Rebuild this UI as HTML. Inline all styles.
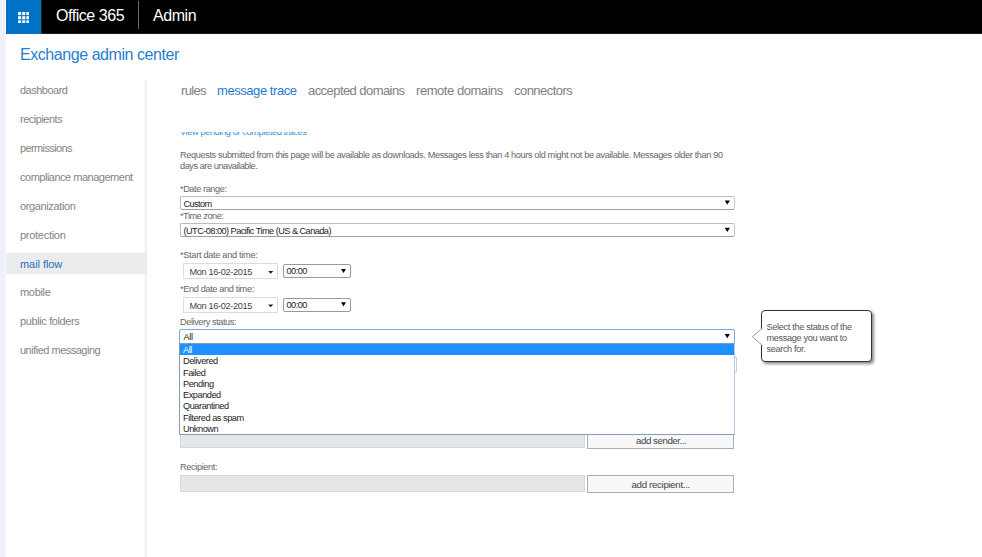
<!DOCTYPE html>
<html>
<head>
<meta charset="utf-8">
<title>Exchange admin center</title>
<style>
html,body{margin:0;padding:0;}
body{width:982px;height:557px;overflow:hidden;background:#fff;position:relative;font-family:"Liberation Sans",sans-serif;color:#333;}
.abs{position:absolute;white-space:nowrap;}
#strip{left:0;top:0;width:5px;height:557px;background:#edf1fa;border-right:1px solid #f6f8fd;}
#stripw{left:5px;top:0;width:1px;height:34px;background:#fff;}
#topbar{left:6px;top:0;width:976px;height:33px;background:#000;border-bottom:1px solid #1c1c1c;}
#waffle{left:6px;top:0;width:35px;height:33px;background:#0072c6;border-bottom:1px solid #1468bd;border-right:1px solid #2b241c;}
#waffle svg{position:absolute;left:11.75px;top:11.5px;}
#o365{left:56px;top:6px;font-size:16px;line-height:20px;color:#fff;}
#hsep{left:138px;top:1px;width:1px;height:28px;background:#6a6a6a;}
#admin{left:153px;top:6px;font-size:16px;line-height:20px;color:#fff;}
#title{left:20px;top:45px;font-size:16px;line-height:20px;color:#2380d0;}
#vdiv{left:144px;top:80px;width:2px;height:477px;background:#f2f2f2;border-left:1px solid #f9f9f9;}
.nav{left:6px;width:139px;height:27px;}
.nav span{position:absolute;left:14px;top:6px;font-size:11px;line-height:15px;color:#848484;white-space:nowrap;}
#navsel{left:6px;top:253px;width:141px;height:21px;background:#ebecee;}
.nav.sel span{color:#2a70b8;}
.tab{top:82px;font-size:13px;line-height:17px;color:#808080;}
.tab.sel{color:#1f7ad0;}
.lbl,.opt,.tiptxt,.sel-box,.datebox,.timebox,#viewlink span,#t_all{letter-spacing:-0.37px;}
.lbl{font-size:9.2px;line-height:11px;color:#666;}
.sel-box{height:12px;border:1px solid #bdbdbd;border-bottom-color:#9e9e9e;border-right-color:#c8c8c8;border-radius:2px;background:#fff;font-size:9.2px;line-height:11px;color:#222;box-sizing:content-box;}
.arrow{position:absolute;width:0;height:0;border-left:3px solid transparent;border-right:3px solid transparent;border-top:4.75px solid #000;}
.gray{background:#e6e6e6;border:1px solid #d3d9de;box-sizing:border-box;}
.btn{background:#f8f8f8;border:1px solid #a9b0b4;box-sizing:border-box;font-size:9.7px;line-height:11px;color:#444;}

.datebox{width:95px;height:16px;border:1px solid #d9dde3;box-sizing:border-box;background:#fff;font-size:9.2px;line-height:11px;color:#444;}
.timebox{width:68px;height:14px;border:1px solid #9a9a9a;border-radius:2px;box-sizing:border-box;background:#fff;font-size:9.2px;line-height:11px;color:#222;}
.arrow2{position:absolute;width:0;height:0;border-left:3px solid transparent;border-right:3px solid transparent;border-top:3.5px solid #222;}
.opt{font-size:9.2px;line-height:11px;color:#222;letter-spacing:-0.45px !important;}
.opt.hi{color:#fff;}
.tiptxt{font-size:9.2px;line-height:11px;color:#555;}
/*FIT*/
#o365{letter-spacing:-0.45px}
#admin{letter-spacing:-0.43px}
#title{letter-spacing:-0.44px}
#n1{letter-spacing:-0.50px}
#n2{letter-spacing:-0.49px}
#n3{letter-spacing:-0.61px}
#n4{letter-spacing:-0.49px}
#n5{letter-spacing:-0.37px}
#n6{letter-spacing:-0.28px}
#n7{letter-spacing:-0.06px}
#n8{letter-spacing:-0.32px}
#n9{letter-spacing:-0.38px}
#n10{letter-spacing:-0.50px}
#tb1{letter-spacing:-0.64px}
#tb2{letter-spacing:-0.44px}
#tb3{letter-spacing:-0.56px}
#tb4{letter-spacing:-0.45px}
#tb5{letter-spacing:-0.53px}
#para1{letter-spacing:-0.38px}
#l_date{letter-spacing:-0.42px}
#l_start{letter-spacing:-0.30px}
#l_end{letter-spacing:-0.36px}
#l_deliv{letter-spacing:-0.42px}
#l_recip{letter-spacing:-0.36px}
#t_custom{letter-spacing:-0.59px}
#t_d1{letter-spacing:-0.36px}
#t_t1{letter-spacing:-0.52px}
#t_adds{letter-spacing:-0.44px}
#t_addr{letter-spacing:-0.32px}
#tip1{letter-spacing:-0.34px}
#t_d2{letter-spacing:-0.36px}
#t_t2{letter-spacing:-0.52px}
#l_tz{letter-spacing:-0.48px}
#tip2{letter-spacing:-0.35px}
#t_tz{letter-spacing:-0.54px}
#para2{letter-spacing:-0.45px}
/*ENDFIT*/
</style>
</head>
<body>
<div id="strip" class="abs"></div>
<div id="stripw" class="abs"></div>
<div id="topbar" class="abs"></div>
<div id="waffle" class="abs"><svg width="11.5" height="11.5" viewBox="0 0 11 11"><g fill="#fff"><rect x="0" y="0" width="3" height="3"/><rect x="4" y="0" width="3" height="3"/><rect x="8" y="0" width="3" height="3"/><rect x="0" y="4" width="3" height="3"/><rect x="4" y="4" width="3" height="3"/><rect x="8" y="4" width="3" height="3"/><rect x="0" y="8" width="3" height="3"/><rect x="4" y="8" width="3" height="3"/><rect x="8" y="8" width="3" height="3"/></g></svg></div>
<div id="o365" class="abs">Office 365</div>
<div id="hsep" class="abs"></div>
<div id="admin" class="abs">Admin</div>
<div id="title" class="abs">Exchange admin center</div>
<div id="vdiv" class="abs"></div>

<div id="navsel" class="abs"></div>
<div class="abs nav" style="top:77px"><span id="n1">dashboard</span></div>
<div class="abs nav" style="top:106px"><span id="n2">recipients</span></div>
<div class="abs nav" style="top:135px"><span id="n3">permissions</span></div>
<div class="abs nav" style="top:164px"><span id="n4">compliance management</span></div>
<div class="abs nav" style="top:193px"><span id="n5">organization</span></div>
<div class="abs nav" style="top:222px"><span id="n6">protection</span></div>
<div class="abs nav sel" style="top:251px"><span id="n7">mail flow</span></div>
<div class="abs nav" style="top:279px"><span id="n8">mobile</span></div>
<div class="abs nav" style="top:308px"><span id="n9">public folders</span></div>
<div class="abs nav" style="top:337px"><span id="n10">unified messaging</span></div>

<div id="tb1" class="abs tab" style="left:181px">rules</div>
<div id="tb2" class="abs tab sel" style="left:217px">message trace</div>
<div id="tb3" class="abs tab" style="left:308px">accepted domains</div>
<div id="tb4" class="abs tab" style="left:416px">remote domains</div>
<div id="tb5" class="abs tab" style="left:514px">connectors</div>

<!-- main content -->
<div id="viewlink" class="abs" style="left:180px;top:132px;width:200px;height:6px;overflow:hidden;"><span class="abs" style="left:0;top:-5px;font-size:9.2px;line-height:11px;color:#3b8fd6;">View pending or completed traces</span></div>
<div id="para1" class="abs lbl" style="left:180px;top:150px;">Requests submitted from this page will be available as downloads. Messages less than 4 hours old might not be available. Messages older than 90</div>
<div id="para2" class="abs lbl" style="left:180px;top:161px;">days are unavailable.</div>

<div id="l_date" class="abs lbl" style="left:180px;top:184px;">*Date range:</div>
<div class="abs sel-box" style="left:180px;top:196px;width:553px;"><span id="t_custom" class="abs" style="left:2.5px;top:2px;">Custom</span></div>
<div id="l_tz" class="abs lbl" style="left:180px;top:211px;">*Time zone:</div>
<div class="abs sel-box" style="left:180px;top:223px;width:553px;"><span id="t_tz" class="abs" style="left:2.5px;top:2px;">(UTC-08:00) Pacific Time (US &amp; Canada)</span></div>

<div id="l_start" class="abs lbl" style="left:180px;top:250px;">*Start date and time:</div>
<div class="abs datebox" style="left:183px;top:263px;"><span id="t_d1" class="abs" style="left:5.5px;top:3px;">Mon 16-02-2015</span></div>
<div class="abs timebox" style="left:283px;top:264px;"><span id="t_t1" class="abs" style="left:2.5px;top:1px;">00:00</span></div>

<div id="l_end" class="abs lbl" style="left:180px;top:284px;">*End date and time:</div>
<div class="abs datebox" style="left:183px;top:297px;"><span id="t_d2" class="abs" style="left:5.5px;top:3px;">Mon 16-02-2015</span></div>
<div class="abs timebox" style="left:283px;top:298px;"><span id="t_t2" class="abs" style="left:2.5px;top:1px;">00:00</span></div>

<div id="l_deliv" class="abs lbl" style="left:180px;top:317px;">Delivery status:</div>

<!-- things behind the dropdown -->
<div class="abs" style="left:733px;top:357px;width:4px;height:15px;border:1px solid #cfcfcf;border-left:none;box-sizing:border-box;background:#fff;"></div>
<div class="abs gray" style="left:180px;top:432px;width:405px;height:16px;"></div>
<div class="abs btn" style="left:587px;top:431px;width:147px;height:18px;"><span id="t_adds" class="abs" style="left:48px;top:3px;">add sender...</span></div>

<div id="l_recip" class="abs lbl" style="left:180px;top:462px;">Recipient:</div>
<div class="abs gray" style="left:180px;top:475px;width:405px;height:17px;"></div>
<div class="abs btn" style="left:587px;top:475px;width:147px;height:18px;"><span id="t_addr" class="abs" style="left:43.5px;top:3px;">add recipient...</span></div>

<!-- delivery status select + open dropdown -->
<div id="dsel" class="abs" style="left:179px;top:329px;width:556px;height:15px;border:1px solid #7ba7e0;border-radius:2px;box-sizing:border-box;background:#fff;"><span id="t_all" class="abs" style="left:3.5px;top:2px;font-size:9.2px;line-height:11px;color:#222;">All</span></div>
<div id="ddl" class="abs" style="left:179px;top:343px;width:556px;height:92px;border:1px solid #7f9db9;border-right-color:#b4c8e0;box-sizing:border-box;background:#fff;">
<div class="abs" style="left:0;top:0;width:554px;height:11px;background:#1e90ff;"></div><div class="abs opt hi" style="left:3px;top:1px;">All</div><div class="abs opt" style="left:3px;top:12px;">Delivered</div><div class="abs opt" style="left:3px;top:24px;">Failed</div><div class="abs opt" style="left:3px;top:35px;">Pending</div><div class="abs opt" style="left:3px;top:46px;">Expanded</div><div class="abs opt" style="left:3px;top:57px;">Quarantined</div><div class="abs opt" style="left:3px;top:69px;">Filtered as spam</div><div class="abs opt" style="left:3px;top:80px;">Unknown</div>
</div>

<svg class="abs" style="left:0;top:0;" width="982" height="557" viewBox="0 0 982 557"><path fill="#000" d="M724.70 200.40H729.90L727.30 204.80Z M724.70 227.70H729.90L727.30 232.10Z M341.10 268.90H345.90L343.50 273.10Z M341.10 302.20H345.90L343.50 306.40Z M724.70 333.90H729.90L727.30 338.30Z"/><path fill="#222" d="M268.10 271.00H273.30L270.70 273.80Z M268.10 304.50H273.30L270.70 307.30Z"/></svg>
<!-- tooltip -->
<div id="tip" class="abs" style="left:761px;top:310px;width:111px;height:52px;border:1px solid #333;border-radius:4px;box-sizing:border-box;background:#fff;box-shadow:2px 2px 3px rgba(0,0,0,.45);"></div>
<svg class="abs" style="left:750px;top:324px;" width="14" height="26" viewBox="0 0 14 26"><path d="M12.5 4.2 L2.3 12.7 L12.5 21.6" fill="#fff" stroke="#999" stroke-width="1"/><rect x="11.5" y="4.8" width="2" height="16.2" fill="#fff"/></svg>
<div id="tip1" class="abs tiptxt" style="left:766.5px;top:322px;">Select the status of the</div>
<div id="tip2" class="abs tiptxt" style="left:766.5px;top:333px;">message you want to</div>
<div id="tip3" class="abs tiptxt" style="left:766.5px;top:344px;">search for.</div>

</body>
</html>
